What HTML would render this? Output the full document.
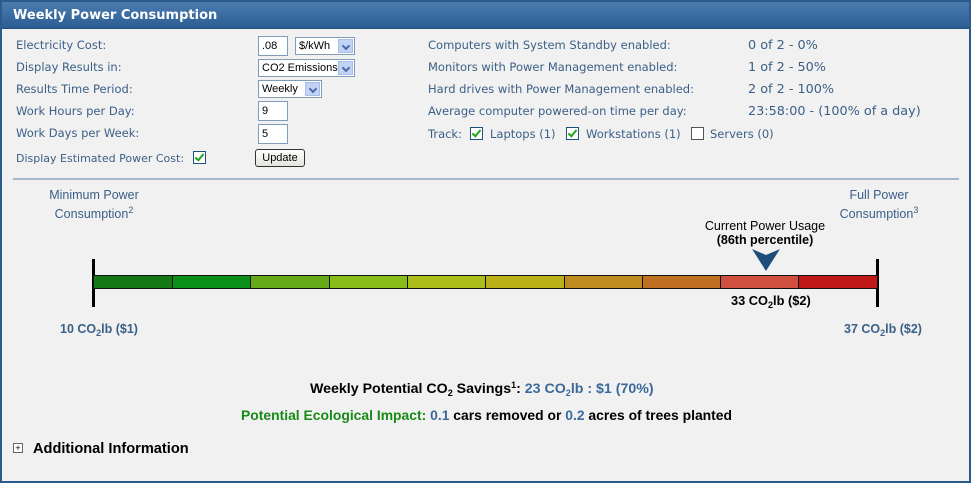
<!DOCTYPE html>
<html><head><meta charset="utf-8"><style>
*{margin:0;padding:0;box-sizing:border-box}
body{width:972px;height:484px;background:#fff;font-family:"DejaVu Sans",Verdana,sans-serif;overflow:hidden;position:relative}
#box{position:absolute;left:0;top:0;width:971px;height:483px;border:2px solid #2b5a8c;background:#f1f1f1}
#hdr{position:absolute;left:0;top:0;width:967px;height:27px;background:linear-gradient(#4a7cb0,#2c5e94);color:#fff;font:bold 13px "DejaVu Sans",sans-serif;padding:6px 0 0 11px;border-bottom:1px solid #24507c}
.a{position:absolute;white-space:nowrap}
.l{color:#3b5f86;font-size:11.5px}
.v{color:#3b5f86;font-size:12.8px}
.in{position:absolute;background:#fff;border:1px solid #7f9db9;font:11px "Liberation Sans",sans-serif;color:#000;padding:3px 0 0 3px;height:20px}
.sel{position:absolute;background:#fff;border:1px solid #7f9db9;font:11px "Liberation Sans",sans-serif;color:#000;padding:2px 0 0 3px;height:18px;overflow:hidden}
.sel i{position:absolute;right:1px;top:1px;width:15px;height:14px;background:#c2d4f4;border:1px solid #a8bee8}
.sel i:after{content:"";position:absolute;left:4px;top:3px;width:4px;height:4px;border-right:2px solid #4a68a8;border-bottom:2px solid #4a68a8;transform:rotate(45deg)}
.cb{position:absolute;width:13px;height:13px;border:1px solid #1c5180;background:#fff}
.cb.k:after{content:"";position:absolute;left:3px;top:0px;width:3px;height:7px;border-right:2px solid #21a121;border-bottom:2px solid #21a121;transform:rotate(40deg)}
.seg{position:absolute;top:275px;height:14px;border:1.5px solid #111;border-right:none}
.b{font-family:"Liberation Sans",Arial,sans-serif;font-weight:bold}
sub{font-size:9px;vertical-align:-3px;line-height:0}
sup{font-size:9px;vertical-align:5px;line-height:0}
</style></head><body>
<div id="box">
<div id="hdr">Weekly Power Consumption</div>
</div>
<div class="a l" style="left:16px;top:38px">Electricity Cost:</div>
<div class="a l" style="left:16px;top:60px">Display Results in:</div>
<div class="a l" style="left:16px;top:82px">Results Time Period:</div>
<div class="a l" style="left:16px;top:104px">Work Hours per Day:</div>
<div class="a l" style="left:16px;top:126px">Work Days per Week:</div>
<div class="a l" style="left:16px;top:152px;font-size:11px">Display Estimated Power Cost:</div>
<div class="cb k" style="left:193px;top:151px"></div>

<div class="in" style="left:258px;top:36px;width:30px">.08</div>
<div class="sel" style="left:295px;top:37px;width:60px">$/kWh<i></i></div>
<div class="sel" style="left:258px;top:59px;width:97px">CO2 Emissions<i></i></div>
<div class="sel" style="left:258px;top:80px;width:64px">Weekly<i></i></div>
<div class="in" style="left:258px;top:101px;width:30px">9</div>
<div class="in" style="left:258px;top:124px;width:30px">5</div>
<div class="a" style="left:255px;top:149px;width:50px;height:18px;border:1px solid #333;border-radius:3px;background:linear-gradient(#fff,#e4e4dc);font:11px 'Liberation Sans',sans-serif;text-align:center;padding-top:2px">Update</div>

<div class="a l" style="left:428px;top:38px">Computers with System Standby enabled:</div>
<div class="a l" style="left:428px;top:60px">Monitors with Power Management enabled:</div>
<div class="a l" style="left:428px;top:82px">Hard drives with Power Management enabled:</div>
<div class="a l" style="left:428px;top:104px">Average computer powered-on time per day:</div>
<div class="a l" style="left:428px;top:127px">Track:</div>
<div class="cb k" style="left:470px;top:127px"></div>
<div class="a l" style="left:490px;top:127px">Laptops (1)</div>
<div class="cb k" style="left:566px;top:127px"></div>
<div class="a l" style="left:586px;top:127px">Workstations (1)</div>
<div class="cb" style="left:691px;top:127px;border-color:#555"></div>
<div class="a l" style="left:710px;top:127px">Servers (0)</div>
<div class="a v" style="left:748px;top:38px">0 of 2 - 0%</div>
<div class="a v" style="left:748px;top:60px">1 of 2 - 50%</div>
<div class="a v" style="left:748px;top:82px">2 of 2 - 100%</div>
<div class="a v" style="left:748px;top:104px">23:58:00 - (100% of a day)</div>

<div class="a" style="left:13px;top:178px;width:946px;height:2px;background:#a6b7c9"></div>

<div class="a" style="left:30px;top:186px;width:128px;text-align:center;color:#3b5f86;font:12.5px/19px 'Liberation Sans',sans-serif">Minimum Power<br>Consumption<sup>2</sup></div>
<div class="a" style="left:815px;top:186px;width:128px;text-align:center;color:#3b5f86;font:12.5px/19px 'Liberation Sans',sans-serif">Full Power<br>Consumption<sup>3</sup></div>
<div class="a" style="left:690px;top:219px;width:150px;text-align:center;color:#000;font:12.5px/14px 'Liberation Sans',sans-serif">Current Power Usage<br><b>(86th percentile)</b></div>
<svg class="a" style="left:750px;top:247px" width="32" height="26"><path d="M2 2 L16 8 L30 2 L16 24 Z" fill="#1f4d7a"/></svg>

<div class="a" style="left:92px;top:259px;width:3px;height:48px;background:#000"></div>
<div class="a" style="left:876px;top:259px;width:3px;height:48px;background:#000"></div>
<div class="seg" style="left:93px;width:79px;background:#147814"></div>
<div class="seg" style="left:172px;width:78px;background:#0a9018"></div>
<div class="seg" style="left:250px;width:79px;background:#66aa18"></div>
<div class="seg" style="left:329px;width:78px;background:#88bc18"></div>
<div class="seg" style="left:407px;width:78px;background:#acbc18"></div>
<div class="seg" style="left:485px;width:79px;background:#bcb018"></div>
<div class="seg" style="left:564px;width:78px;background:#c08c20"></div>
<div class="seg" style="left:642px;width:78px;background:#c07020"></div>
<div class="seg" style="left:720px;width:78px;background:#d05040"></div>
<div class="seg" style="left:798px;width:80px;background:#c01818;border-right:1.5px solid #111"></div>

<div class="a b" style="left:731px;top:293px;font-size:12.8px;color:#000">33 CO<sub>2</sub>lb ($2)</div>
<div class="a b" style="left:60px;top:322px;font-size:12.5px;color:#3b5f86">10 CO<sub>2</sub>lb ($1)</div>
<div class="a b" style="left:844px;top:322px;font-size:12.5px;color:#3b5f86">37 CO<sub>2</sub>lb ($2)</div>

<div class="a b" style="left:310px;top:381px;font-size:14.2px;color:#000">Weekly Potential CO<sub>2</sub> Savings<sup>1</sup>: <span style="color:#3b6a9a">23 CO<sub>2</sub>lb : $1 (70%)</span></div>
<div class="a b" style="left:241px;top:407px;font-size:13.9px;color:#000"><span style="color:#178a17">Potential Ecological Impact:</span> <span style="color:#3b6a9a">0.1</span> cars removed or <span style="color:#3b6a9a">0.2</span> acres of trees planted</div>

<div class="a" style="left:13px;top:443px;width:10px;height:10px;border:1px solid #666;background:#fff;font:9px/8px 'Liberation Sans',sans-serif;text-align:center">+</div>
<div class="a b" style="left:33px;top:441px;font-size:14.6px;color:#000">Additional Information</div>
</body></html>
